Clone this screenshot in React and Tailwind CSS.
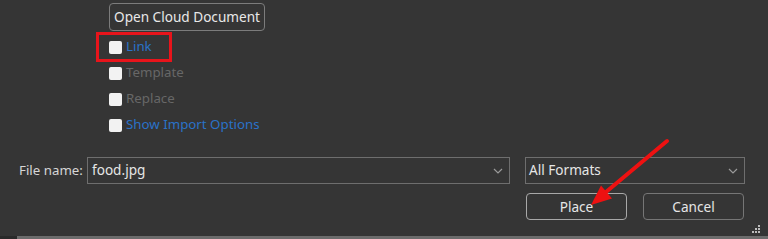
import React from "react";

const font = { fontFamily: '"Noto Sans", "Open Sans", sans-serif' };

const Check = ({ label, color }) => (
  <div className="flex items-center h-[26px]">
    <span className="w-[13px] h-[13px] rounded-[2px] bg-[#f2f2f2]" />
    <span className={`ml-[4px] text-[13.3px] leading-none ${color}`}>{label}</span>
  </div>
);

const Chevron = () => (
  <svg width="10" height="6" viewBox="0 0 10 6" className="mr-[6px]">
    <path d="M1 1 L5 5 L9 1" fill="none" stroke="#9a9a9a" strokeWidth="1.2" />
  </svg>
);

export default function App() {
  return (
    <div className="relative w-[768px] h-[239px] bg-[#353535] overflow-hidden text-[#e4e4e4]" style={font}>
      <div className="h-[236px] flex flex-col">
        {/* options */}
        <div className="pl-[109px] pt-[3px] flex flex-col items-start">
          <button className="w-[156px] h-[28px] rounded-[4px] border border-[#7c7c7c] text-[13.6px] text-[#e8e8e8] leading-none">
            Open Cloud Document
          </button>
          <div className="mt-[3px] flex flex-col">
            <Check label="Link" color="text-[#2a72c8]" />
            <Check label="Template" color="text-[#676767]" />
            <Check label="Replace" color="text-[#676767]" />
            <Check label="Show Import Options" color="text-[#2a72c8]" />
          </div>
        </div>

        {/* file name */}
        <div className="mt-[19px] flex items-center pl-[19px]">
          <span className="w-[68px] text-[13.3px] text-[#d6d6d6]">File name:</span>
          <div className="w-[423px] h-[27px] border border-[#6e6e6e] flex items-center justify-between pl-[4px]">
            <span className="text-[13.6px] text-[#e6e6e6]">food.jpg</span>
            <Chevron />
          </div>
          <div className="ml-[15px] w-[220px] h-[27px] border border-[#6e6e6e] flex items-center justify-between pl-[3px]">
            <span className="text-[13.6px] text-[#e6e6e6]">All Formats</span>
            <Chevron />
          </div>
        </div>

        {/* buttons */}
        <div className="mt-[9px] flex pl-[526px] gap-[16px]">
          <button className="w-[101px] h-[27px] rounded-[4px] border border-[#a8a8a8] text-[13.6px] text-[#e6e6e6] leading-none">
            Place
          </button>
          <button className="w-[101px] h-[27px] rounded-[4px] border border-[#767676] text-[13.6px] text-[#e6e6e6] leading-none">
            Cancel
          </button>
        </div>
      </div>

      {/* bottom strip */}
      <div className="flex h-[3px]">
        <div className="w-[17px] bg-[#2a2a2a]" />
        <div className="flex-1 bg-[#6c6c6c]" />
      </div>

      {/* highlight box */}
      <div className="absolute left-[96px] top-[32px] w-[76px] h-[30px] border-[3px] border-[#e8141b]" />

      {/* resize grip */}
      <svg className="absolute left-[751px] top-[224px]" width="10" height="10" viewBox="0 0 10 10">
        <rect x="7" y="1" width="2" height="2" fill="#bdbdbd" />
        <rect x="4" y="4" width="2" height="2" fill="#bdbdbd" />
        <rect x="7" y="4" width="2" height="2" fill="#bdbdbd" />
        <rect x="1" y="7" width="2" height="2" fill="#bdbdbd" />
        <rect x="4" y="7" width="2" height="2" fill="#bdbdbd" />
        <rect x="7" y="7" width="2" height="2" fill="#bdbdbd" />
      </svg>

      {/* annotation arrow */}
      <svg className="absolute left-0 top-0 pointer-events-none" width="768" height="239">
        <line x1="667" y1="141" x2="606" y2="192" stroke="#ee1111" strokeWidth="4" strokeLinecap="round" />
        <polygon points="591,205 612,198.5 601,185.5" fill="#ee1111" />
      </svg>
    </div>
  );
}
